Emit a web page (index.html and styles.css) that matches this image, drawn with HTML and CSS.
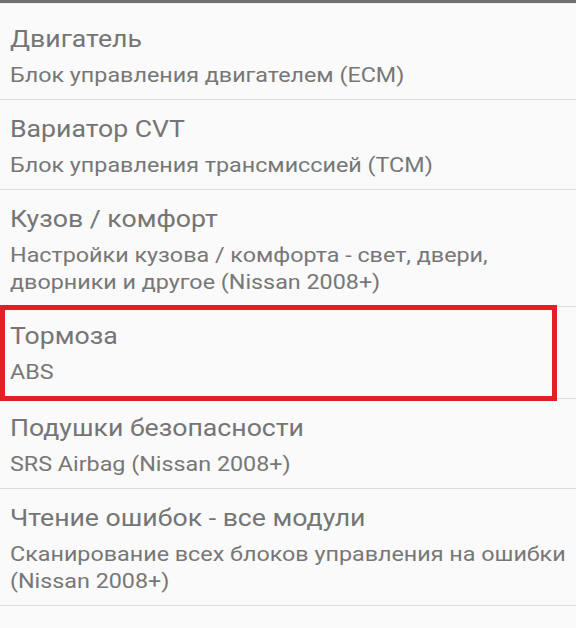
FILE: index.html
```html
<!DOCTYPE html>
<html lang="ru">
<head>
<meta charset="utf-8">
<link rel="stylesheet" href="styles.css">
</head>
<body>
<div class="topbar"></div>
<div class="spacer"></div>
<ul class="list">
  <li class="item">
    <div class="text">
      <div class="title">Двигатель</div>
      <div class="sub">Блок управления двигателем (ECM)</div>
    </div>
  </li>
  <li class="item">
    <div class="text">
      <div class="title">Вариатор CVT</div>
      <div class="sub">Блок управления трансмиссией (TCM)</div>
    </div>
  </li>
  <li class="item">
    <div class="text">
      <div class="title">Кузов / комфорт</div>
      <div class="sub">Настройки кузова / комфорта - свет, двери, дворники и другое (Nissan 2008+)</div>
    </div>
  </li>
  <li class="item selected">
    <div class="text">
      <div class="title">Тормоза</div>
      <div class="sub">ABS</div>
    </div>
    <div class="highlight"></div>
  </li>
  <li class="item">
    <div class="text">
      <div class="title">Подушки безопасности</div>
      <div class="sub">SRS Airbag (Nissan 2008+)</div>
    </div>
  </li>
  <li class="item">
    <div class="text">
      <div class="title">Чтение ошибок - все модули</div>
      <div class="sub">Сканирование всех блоков управления на ошибки (Nissan 2008+)</div>
    </div>
  </li>
</ul>
</body>
</html>
```
FILE: styles.css
```css
html, body {
  margin: 0;
  padding: 0;
  background: #fafafa;
  font-family: Roboto, "Noto Sans", sans-serif;
}
.topbar {
  height: 3px;
  background: #6f6f6f;
}
.spacer {
  height: 7px;
  border-top: 1px solid #ededed;
  box-sizing: border-box;
}
.list {
  list-style: none;
  margin: 0;
  padding: 0;
}
.item {
  position: relative;
  padding: 13px 4px 10px 10px;
  border-bottom: 1px solid #dcdcdc;
}
.item.selected {
  padding-bottom: 12px;
}
.text {
  width: calc(100% / 1.11);
  transform: scaleX(1.11);
  transform-origin: left center;
}
.title {
  font-size: 24px;
  line-height: 32px;
  color: #757575;
  margin-bottom: 7px;
}
.sub {
  font-size: 21px;
  line-height: 27px;
  color: #777777;
}
.highlight {
  position: absolute;
  left: 0;
  top: -2px;
  width: 557px;
  height: 96px;
  border: 5px solid #e41e26;
  box-sizing: border-box;
  pointer-events: none;
}
```
